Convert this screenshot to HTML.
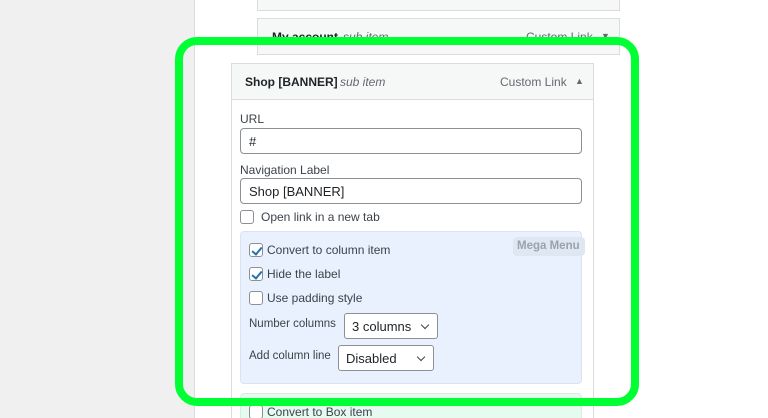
<!DOCTYPE html>
<html><head><style>
*{box-sizing:border-box;margin:0;padding:0}
html,body{width:768px;height:418px;overflow:hidden}
body{background:#fff;font-family:"Liberation Sans",sans-serif;color:#1d2327;position:relative;font-size:12px}
.abs{position:absolute;white-space:nowrap}
.grey{left:0;top:0;width:195px;height:418px;background:#f0f0f1;border-right:1px solid #dcdcde}
.box{border:1px solid #dcdcde;background:#f6f7f7}
.inp{border:1px solid #8c8f94;border-radius:4px;background:#fff;height:26px;padding:5px 8px;font-size:13px}
.cb{width:14px;height:14px;border:1px solid #8c8f94;border-radius:3px;background:#fff;position:absolute}
.cb.on::after{content:"";position:absolute;left:4px;top:1px;width:4px;height:8px;border:solid #2271b1;border-width:0 2px 2px 0;transform:rotate(40deg)}
.t{position:absolute;font-size:12px;color:#3c434a;white-space:nowrap}
.sel{position:absolute;border:1px solid #8c8f94;border-radius:3px;background:#fff;height:26px;font-size:13px;padding:5px 7px;color:#1d2327}
.sel::after{content:"";position:absolute;right:9px;top:8px;width:5px;height:5px;border:solid #3c434a;border-width:0 1.5px 1.5px 0;transform:rotate(45deg)}
</style></head><body>
<div class="abs grey"></div>
<div class="abs box" style="left:257px;top:-2px;width:363px;height:13px"></div>
<div class="abs box" style="left:257px;top:18px;width:363px;height:37px">
 <span class="abs" style="left:14px;top:11px;font-weight:bold;font-size:12px">My account</span>
 <span class="abs" style="left:85px;top:11px;font-style:italic;color:#646970;font-size:12px">sub item</span>
 <span class="abs" style="left:268px;top:11px;color:#646970;font-size:12px">Custom Link</span>
 <span class="abs" style="left:343px;top:12px;color:#646970;font-size:9px">▼</span>
</div>
<div class="abs" style="left:231px;top:63px;width:363px;height:360px;border:1px solid #dcdcde;background:#fff">
 <div style="height:36px;background:#f6f7f7;border-bottom:1px solid #dcdcde;position:relative">
  <span class="abs" style="left:13px;top:11px;font-weight:bold;font-size:12px">Shop [BANNER]</span>
  <span class="abs" style="left:108px;top:11px;font-style:italic;color:#646970;font-size:12px">sub item</span>
  <span class="abs" style="left:268px;top:11px;color:#646970;font-size:12px">Custom Link</span>
  <span class="abs" style="left:343px;top:12px;color:#646970;font-size:9px">▲</span>
 </div>
</div>
<span class="t" style="left:240px;top:112px">URL</span>
<div class="abs inp" style="left:240px;top:128px;width:342px">#</div>
<span class="t" style="left:240px;top:163px">Navigation Label</span>
<div class="abs inp" style="left:240px;top:178px;width:342px">Shop [BANNER]</div>
<div class="cb" style="left:240px;top:210px"></div>
<span class="t" style="left:261px;top:210px">Open link in a new tab</span>
<div class="abs" style="left:240px;top:231px;width:342px;height:153px;background:#e8f1fd;border:1px solid #d8e4f3;border-radius:4px"></div>
<div class="abs" style="left:513px;top:237px;width:72px;height:19px;background:#dfe8f2;border-radius:4px;color:#9aa3ad;font-weight:bold;font-size:11.5px;padding:3px 4px">Mega Menu</div>
<div class="cb on" style="left:249px;top:243px"></div><span class="t" style="left:267px;top:243px">Convert to column item</span>
<div class="cb on" style="left:249px;top:267px"></div><span class="t" style="left:267px;top:267px">Hide the label</span>
<div class="cb" style="left:249px;top:291px"></div><span class="t" style="left:267px;top:291px">Use padding style</span>
<span class="t" style="left:249px;top:318px;font-size:11.5px">Number columns</span>
<div class="sel" style="left:344px;top:313px;width:94px">3 columns</div>
<span class="t" style="left:249px;top:350px;font-size:11.5px">Add column line</span>
<div class="sel" style="left:338px;top:345px;width:96px">Disabled</div>
<div class="abs" style="left:240px;top:393px;width:342px;height:40px;background:#e6fbef;border:1px solid #d3f0df;border-radius:4px"></div>
<div class="cb" style="left:249px;top:405px"></div><span class="t" style="left:267px;top:405px">Convert to Box item</span>
<div class="abs" style="left:175px;top:37px;width:464px;height:369px;border:8px solid #00ff33;border-radius:22px"></div>
</body></html>
